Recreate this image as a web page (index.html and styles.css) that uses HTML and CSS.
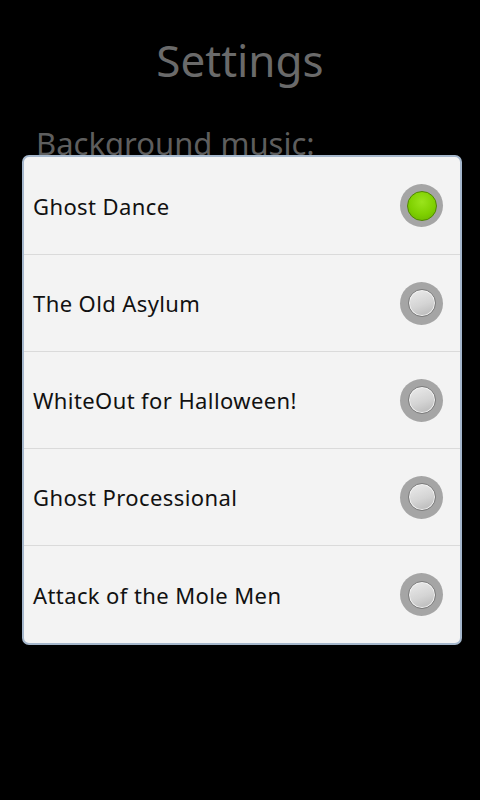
FILE: index.html
```html
<!DOCTYPE html>
<html>
<head>
<meta charset="utf-8">
<link rel="stylesheet" href="styles.css">
</head>
<body>
<div class="screen">
  <h1 class="title">Settings</h1>
  <div class="label">Background music:</div>
</div>
<div class="dialog">
  <div class="row"><span class="name">Ghost Dance</span><span class="radio on"><span class="dot"></span></span></div>
  <div class="row"><span class="name">The Old Asylum</span><span class="radio"><span class="dot"></span></span></div>
  <div class="row"><span class="name">WhiteOut for Halloween!</span><span class="radio"><span class="dot"></span></span></div>
  <div class="row"><span class="name">Ghost Processional</span><span class="radio"><span class="dot"></span></span></div>
  <div class="row"><span class="name">Attack of the Mole Men</span><span class="radio"><span class="dot"></span></span></div>
</div>
</body>
</html>
```
FILE: styles.css
```css
html, body {
  margin: 0;
  padding: 0;
  background: #000;
  width: 480px;
  height: 800px;
  overflow: hidden;
  font-family: "Noto Sans", "Open Sans", sans-serif;
}
.screen {
  display: flex;
  flex-direction: column;
}
.title {
  margin: 30px 0 0 0;
  font-size: 44px;
  font-weight: normal;
  color: #6a6a6a;
  text-align: center;
  line-height: 60px;
}
.label {
  margin: 31px 0 0 36px;
  font-size: 31px;
  color: #5e5e5e;
  line-height: 44px;
}
.dialog {
  position: absolute;
  left: 22px;
  top: 155px;
  width: 436px;
  background: #f3f3f3;
  border: 2px solid #a5b7cc;
  border-radius: 7px;
  display: flex;
  flex-direction: column;
}
.row {
  height: 96px;
  border-top: 1px solid #dadada;
  display: flex;
  align-items: center;
  justify-content: space-between;
  padding: 0 17px 0 9px;
}
.row:first-child {
  border-top: none;
  height: 97px;
}
.row:last-child {
  height: 97px;
}
.name {
  font-size: 22px;
  letter-spacing: 0.4px;
  color: #111;
}
.radio {
  width: 43px;
  height: 43px;
  border-radius: 50%;
  background: radial-gradient(circle, #a5a5a5 0%, #a5a5a5 80%, #b4b4b4 100%);
  display: flex;
  align-items: center;
  justify-content: center;
}
.dot {
  width: 26px;
  height: 26px;
  border-radius: 50%;
  border: 1px solid #7a7a7a;
  box-shadow: inset 0 0 0 1px #f4f4f4;
  background: linear-gradient(160deg, #ececec 0%, #d4d4d4 55%, #b5b5b5 100%);
}
.radio.on .dot {
  width: 28px;
  height: 28px;
  border: 1px solid #4f8700;
  box-shadow: none;
  background: radial-gradient(circle at 50% 35%, #9ae41c 0%, #7fd000 55%, #66b000 100%);
}
```
